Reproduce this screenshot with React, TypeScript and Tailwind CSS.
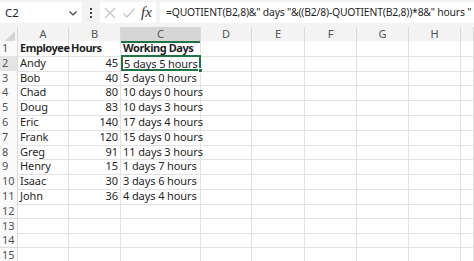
const cols = ['A', 'B', 'C', 'D', 'E', 'F', 'G', 'H', '']

const rows: [string, string, string][] = [
  ['Employee', 'Hours', 'Working Days'],
  ['Andy', '45', '5 days 5 hours'],
  ['Bob', '40', '5 days 0 hours'],
  ['Chad', '80', '10 days 0 hours'],
  ['Doug', '83', '10 days 3 hours'],
  ['Eric', '140', '17 days 4 hours'],
  ['Frank', '120', '15 days 0 hours'],
  ['Greg', '91', '11 days 3 hours'],
  ['Henry', '15', '1 days 7 hours'],
  ['Isaac', '30', '3 days 6 hours'],
  ['John', '36', '4 days 4 hours'],
  ['', '', ''],
  ['', '', ''],
  ['', '', ''],
  ['', '', ''],
]

const gridCols = 'grid grid-cols-[18px_51px_52px_80px_51px_53px_52px_52px_52px_1fr]'

export default function App() {
  return (
    <div
      className="w-[474px] h-[261px] overflow-hidden bg-white text-[#1f1f1f]"
      style={{ fontFamily: '"Noto Sans", "Open Sans", sans-serif' }}
    >
      {/* formula bar */}
      <div className="flex items-center h-[27px] bg-[#f3f3f3] pt-[1px] pb-[3px] gap-[4px]">
        <div className="flex items-center justify-between w-[82px] h-[21px] bg-white pl-[5px] pr-[4px] text-[11.5px]">
          <span>C2</span>
          <svg width="10" height="10" viewBox="0 0 10 10" fill="none" stroke="#444" strokeWidth="1.2">
            <path d="M1.5 3.5 L5 7 L8.5 3.5" />
          </svg>
        </div>
        <div className="w-[10px] flex flex-col items-center gap-[2px]">
          <span className="w-[2px] h-[2px] bg-[#444]" />
          <span className="w-[2px] h-[2px] bg-[#444]" />
          <span className="w-[2px] h-[2px] bg-[#444]" />
        </div>
        <div className="flex items-center w-[56px] h-[21px] bg-white px-[3px] gap-[5px]">
          <svg width="14" height="14" viewBox="0 0 14 14" fill="none" stroke="#c4c4c4" strokeWidth="1.2">
            <path d="M2 2 L12 12 M12 2 L2 12" />
          </svg>
          <svg width="14" height="14" viewBox="0 0 14 14" fill="none" stroke="#c4c4c4" strokeWidth="1.2">
            <path d="M1.5 7.5 L5 11 L12.5 2.5" />
          </svg>
          <span
            className="italic text-[15px] text-[#333] leading-none"
            style={{ fontFamily: '"Liberation Serif", serif' }}
          >
            fx
          </span>
        </div>
        <div className="flex-1 h-[21px] bg-white flex items-center pl-[6px] text-[10.4px] tracking-[-0.2px] whitespace-nowrap overflow-hidden">
          =QUOTIENT(B2,8)&amp;" days "&amp;((B2/8)-QUOTIENT(B2,8))*8&amp;" hours "
        </div>
      </div>

      {/* column headers */}
      <div className={`${gridCols} h-[14px] bg-[#f3f3f3] text-[11px] text-[#555] leading-[14px]`}>
        <div className="relative border-r border-[#dadada]">
          <svg className="absolute right-[2px] bottom-[2px]" width="10" height="10" viewBox="0 0 10 10">
            <path d="M10 0 L10 10 L0 10 Z" fill="#d6d6d6" />
          </svg>
        </div>
        {cols.map((c, i) => (
          <div
            key={i}
            className={
              c === 'C'
                ? 'text-center bg-[#d6d6d6] border-b-2 border-[#217346] border-r border-r-[#dadada]'
                : 'text-center border-r border-[#dadada]'
            }
          >
            {c}
          </div>
        ))}
      </div>

      {/* rows */}
      {rows.map((r, i) => (
        <div
          key={i}
          className={`${gridCols} h-[14.8px] text-[11px] leading-[14.8px] ${
            i === 0 ? 'tracking-[-0.45px]' : 'tracking-[-0.1px]'
          }`}
        >
          <div
            className={`${
              i === 1 ? 'bg-[#e4e4e4]' : 'bg-[#fafafa]'
            } text-[#555] border-r border-b border-[#dadada] pl-[2px] text-[11px] leading-[14px] tracking-normal`}
          >
            {i + 1}
          </div>
          <div
            className={`border-r border-b border-[#e2e2e2] pl-[2px] whitespace-nowrap ${
              i === 0 ? 'font-bold' : ''
            }`}
          >
            {r[0]}
          </div>
          <div
            className={`border-r border-b border-[#e2e2e2] px-[2px] whitespace-nowrap ${
              i === 0 ? 'font-bold text-left' : 'text-right'
            }`}
          >
            {r[1]}
          </div>
          <div
            className={
              i === 1
                ? 'relative border-2 border-[#217346] pl-[1px] -mt-[1px] h-[16px] leading-[13px] whitespace-nowrap'
                : `border-r border-b border-[#e2e2e2] pl-[2px] whitespace-nowrap ${i === 0 ? 'font-bold' : ''}`
            }
          >
            {r[2]}
            {i === 1 && (
              <span className="absolute -right-[4px] -bottom-[4px] w-[5px] h-[5px] bg-[#217346] border border-white" />
            )}
          </div>
          {[0, 1, 2, 3, 4, 5].map((k) => (
            <div key={k} className="border-r border-b border-[#e2e2e2]" />
          ))}
        </div>
      ))}
    </div>
  )
}
